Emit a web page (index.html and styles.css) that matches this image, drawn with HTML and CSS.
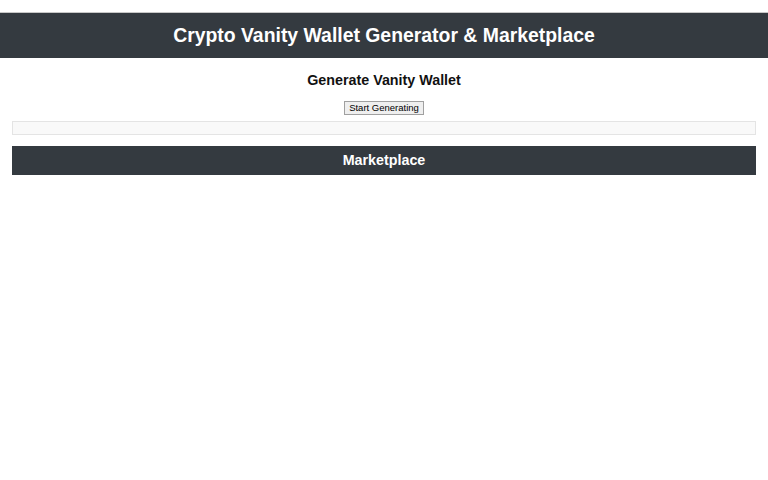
FILE: index.html
```html
<!DOCTYPE html>
<html lang="en">
<head>
  <meta charset="UTF-8">
  <meta name="viewport" content="width=device-width, initial-scale=1.0">
  <title>Crypto Vanity Wallet Generator &amp; Marketplace</title>
  <link rel="stylesheet" href="styles.css">
</head>
<body>

  <header>
    <h1>Crypto Vanity Wallet Generator &amp; Marketplace</h1>
  </header>

  <main>
    <section class="generator">
      <h2>Generate Vanity Wallet</h2>
      <button id="startBtn">Start Generating</button>
      <div id="output" class="output"></div>
    </section>

    <section class="marketplace">
      <h2>Marketplace</h2>
      <div id="listings"></div>
    </section>
  </main>

</body>
</html>
```

FILE: styles.css
```css
body {
  font-family: "Liberation Sans", Arial, sans-serif;
  margin: 0;
  padding-top: 12px;
  background-color: #fff;
  text-align: center;
}

header {
  background-color: #343a40;
  border-top: 1px solid #c8c8c8;
  color: #fff;
  height: 45px;
  display: flex;
  align-items: center;
  justify-content: center;
}

header h1 {
  margin: 0;
  font-size: 19.4px;
}

main {
  padding: 0 12px;
}

.generator h2 {
  font-size: 14.3px;
  margin: 14px 0 13px;
  color: #111;
}

.generator button {
  font-family: "Liberation Sans", Arial, sans-serif;
  font-size: 9.5px;
  padding: 0 4px;
  height: 14px;
  line-height: 12px;
  background-color: #efefef;
  border: 1px solid #a0a0a0;
  border-radius: 0;
  color: #000;
  vertical-align: top;
}

.output {
  margin-top: 2px;
  height: 12px;
  background-color: #f9f9f9;
  border: 1px solid #e4e4e4;
}

.marketplace h2 {
  margin: 11px 0 0;
  height: 29px;
  line-height: 29px;
  background-color: #343a40;
  color: #fff;
  font-size: 14.3px;
}
```
